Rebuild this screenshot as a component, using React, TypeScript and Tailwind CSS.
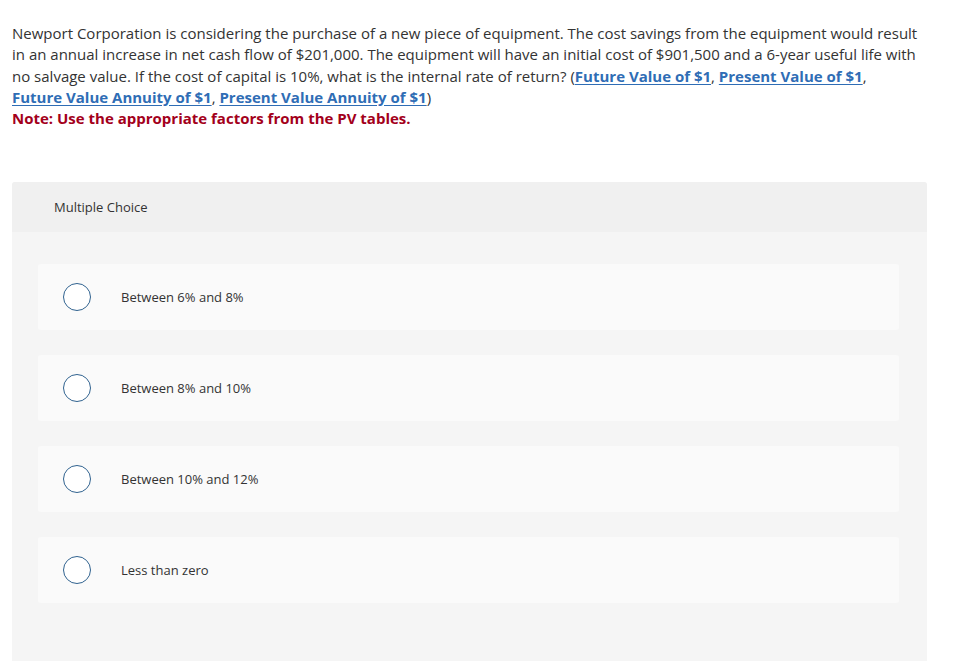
const options = [
  "Between 6% and 8%",
  "Between 8% and 10%",
  "Between 10% and 12%",
  "Less than zero",
]

function Link({ children }: { children: React.ReactNode }) {
  return (
    <a href="#" className="font-bold text-[#2f6db5] underline underline-offset-2">
      {children}
    </a>
  )
}

export default function App() {
  return (
    <div
      className="min-h-screen bg-white text-[#333]"
      style={{ fontFamily: '"Open Sans", "Liberation Sans", sans-serif' }}
    >
      <div className="px-3 pt-[23px] text-[15px] leading-[21.3px] w-[950px]">
        <p className="whitespace-nowrap">
          Newport Corporation is considering the purchase of a new piece of equipment. The cost
          savings from the equipment would result
          <br />
          in an annual increase in net cash flow of $201,000. The equipment will have an initial
          cost of $901,500 and a 6-year useful life with
          <br />
          no salvage value. If the cost of capital is 10%, what is the internal rate of return? (
          <Link>Future Value of $1</Link>, <Link>Present Value of $1</Link>,
          <br />
          <Link>Future Value Annuity of $1</Link>, <Link>Present Value Annuity of $1</Link>)
        </p>
        <p className="font-bold text-[#a3001b]">Note: Use the appropriate factors from the PV tables.</p>
      </div>

      <div className="ml-3 mt-[53px] w-[915px] rounded-t-[3px] bg-[#f5f5f5] pb-24">
        <div className="flex h-[50px] items-center rounded-t-[3px] bg-[#f0f0f0] pl-[42px] text-[13px]">
          Multiple Choice
        </div>
        <div className="flex flex-col gap-[25px] pl-[26px] pr-[28px] pt-[32px]">
          {options.map((o) => (
            <label
              key={o}
              className="flex h-[66px] items-center rounded-[3px] bg-[#fafafa] pl-[25px] text-[13px]"
            >
              <span className="h-[28px] w-[28px] rounded-full border-[1.5px] border-[#30628f] bg-white" />
              <span className="ml-[30px]">{o}</span>
            </label>
          ))}
        </div>
      </div>
    </div>
  )
}
